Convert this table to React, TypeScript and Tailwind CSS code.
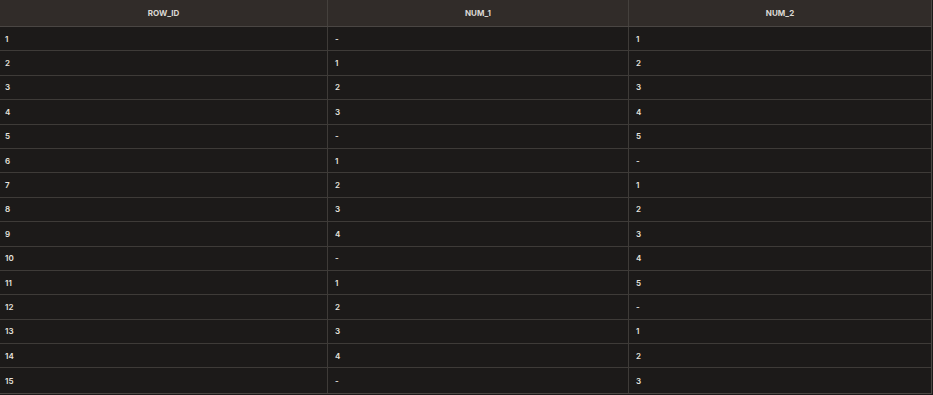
const rows: [string, string, string][] = [
  ["1", "-", "1"],
  ["2", "1", "2"],
  ["3", "2", "3"],
  ["4", "3", "4"],
  ["5", "-", "5"],
  ["6", "1", "-"],
  ["7", "2", "1"],
  ["8", "3", "2"],
  ["9", "4", "3"],
  ["10", "-", "4"],
  ["11", "1", "5"],
  ["12", "2", "-"],
  ["13", "3", "1"],
  ["14", "4", "2"],
  ["15", "-", "3"],
];

export default function App() {
  return (
    <div
      className="w-[933px] h-[395px] bg-[#1c1a19] overflow-hidden"
      style={{ fontFamily: "Inter, 'Open Sans', sans-serif" }}
    >
      <div className="w-[932px] border-r border-b border-[#4a4643]">
        {/* Header */}
        <div className="grid grid-cols-[327px_301px_1fr] h-[27px] bg-[#312c29] border-b border-[#4a4643]">
          <HeaderCell>ROW_ID</HeaderCell>
          <HeaderCell border>NUM_1</HeaderCell>
          <HeaderCell border>NUM_2</HeaderCell>
        </div>

        {/* Body */}
        {rows.map((r, i) => (
          <div
            key={i}
            className="grid grid-cols-[327px_301px_1fr] h-[24.4px] border-b border-[#3e3b38] last:border-b-0 text-[8px] font-semibold text-[#e6e3df]"
          >
            <div className="flex items-center pl-[5px]">{r[0]}</div>
            <div className="flex items-center pl-[7px] border-l border-[#3e3b38]">{r[1]}</div>
            <div className="flex items-center pl-[7px] border-l border-[#3e3b38]">{r[2]}</div>
          </div>
        ))}
      </div>
    </div>
  );
}

function HeaderCell({ children, border }: { children: React.ReactNode; border?: boolean }) {
  return (
    <div
      className={`flex items-center justify-center text-[8px] font-bold text-[#dcd9d5] ${
        border ? "border-l border-[#45413d]" : ""
      }`}
    >
      {children}
    </div>
  );
}
